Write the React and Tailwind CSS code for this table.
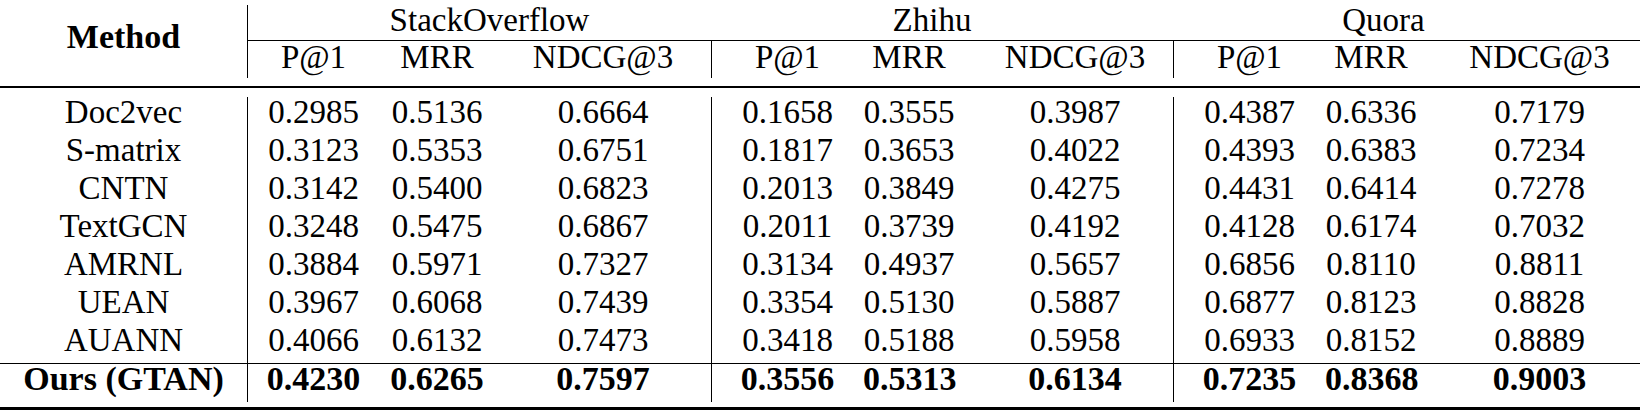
import React from "react";

const rows = [
  ["Doc2vec", "0.2985", "0.5136", "0.6664", "0.1658", "0.3555", "0.3987", "0.4387", "0.6336", "0.7179"],
  ["S-matrix", "0.3123", "0.5353", "0.6751", "0.1817", "0.3653", "0.4022", "0.4393", "0.6383", "0.7234"],
  ["CNTN", "0.3142", "0.5400", "0.6823", "0.2013", "0.3849", "0.4275", "0.4431", "0.6414", "0.7278"],
  ["TextGCN", "0.3248", "0.5475", "0.6867", "0.2011", "0.3739", "0.4192", "0.4128", "0.6174", "0.7032"],
  ["AMRNL", "0.3884", "0.5971", "0.7327", "0.3134", "0.4937", "0.5657", "0.6856", "0.8110", "0.8811"],
  ["UEAN", "0.3967", "0.6068", "0.7439", "0.3354", "0.5130", "0.5887", "0.6877", "0.8123", "0.8828"],
  ["AUANN", "0.4066", "0.6132", "0.7473", "0.3418", "0.5188", "0.5958", "0.6933", "0.8152", "0.8889"],
];

const ours = ["Ours (GTAN)", "0.4230", "0.6265", "0.7597", "0.3556", "0.5313", "0.6134", "0.7235", "0.8368", "0.9003"];

const grid =
  "grid grid-cols-[247px_132px_116px_216px_152px_92px_218px_152px_92px_223px]";

// cell classes per column: vertical rules sit at the start of each dataset group
const cellClass = [
  "text-center",
  "text-center border-l border-black",
  "text-center",
  "text-center",
  "text-center border-l border-black",
  "text-center",
  "text-center pl-[22px]",
  "text-center border-l border-black",
  "text-center",
  "text-center pl-[22px]",
];

const Row = ({ cells, bold }) => (
  <div className={`${grid} h-[38px] ${bold ? "font-bold text-[34px] leading-[30px]" : ""}`}>
    {cells.map((c, i) => (
      <div key={i} className={cellClass[i]}>
        {c}
      </div>
    ))}
  </div>
);

export default function App() {
  return (
    <div
      className="w-[1640px] h-[412px] bg-white text-black text-[33px] leading-[31px] pt-[5px] overflow-hidden"
      style={{ fontFamily: '"Liberation Serif", "Times New Roman", serif' }}
    >
      <div className={`${grid} grid-rows-[36px_37px]`}>
        <div className="row-span-2 text-center font-bold text-[34px] leading-[30px] pt-[17px]">
          Method
        </div>
        <div className="col-span-3 text-center border-l border-b border-black pl-[20px]">
          StackOverflow
        </div>
        <div className="col-span-3 text-center border-b border-black pr-[20px]">Zhihu</div>
        <div className="col-span-3 text-center border-b border-black pr-[46px]">Quora</div>
        {["P@1", "MRR", "NDCG@3", "P@1", "MRR", "NDCG@3", "P@1", "MRR", "NDCG@3"].map(
          (h, i) => (
            <div key={i} className={`${cellClass[i + 1]} pt-[1px]`}>
              {h}
            </div>
          )
        )}
      </div>

      <div className="mt-[8px] h-[2px] bg-black" />

      <div className="mt-[9px]">
        {rows.map((r) => (
          <Row key={r[0]} cells={r} />
        ))}
        <div className="h-px bg-black" />
        <Row cells={ours} bold />
      </div>

      <div className="mt-[5px] h-[3px] bg-black" />
    </div>
  );
}
